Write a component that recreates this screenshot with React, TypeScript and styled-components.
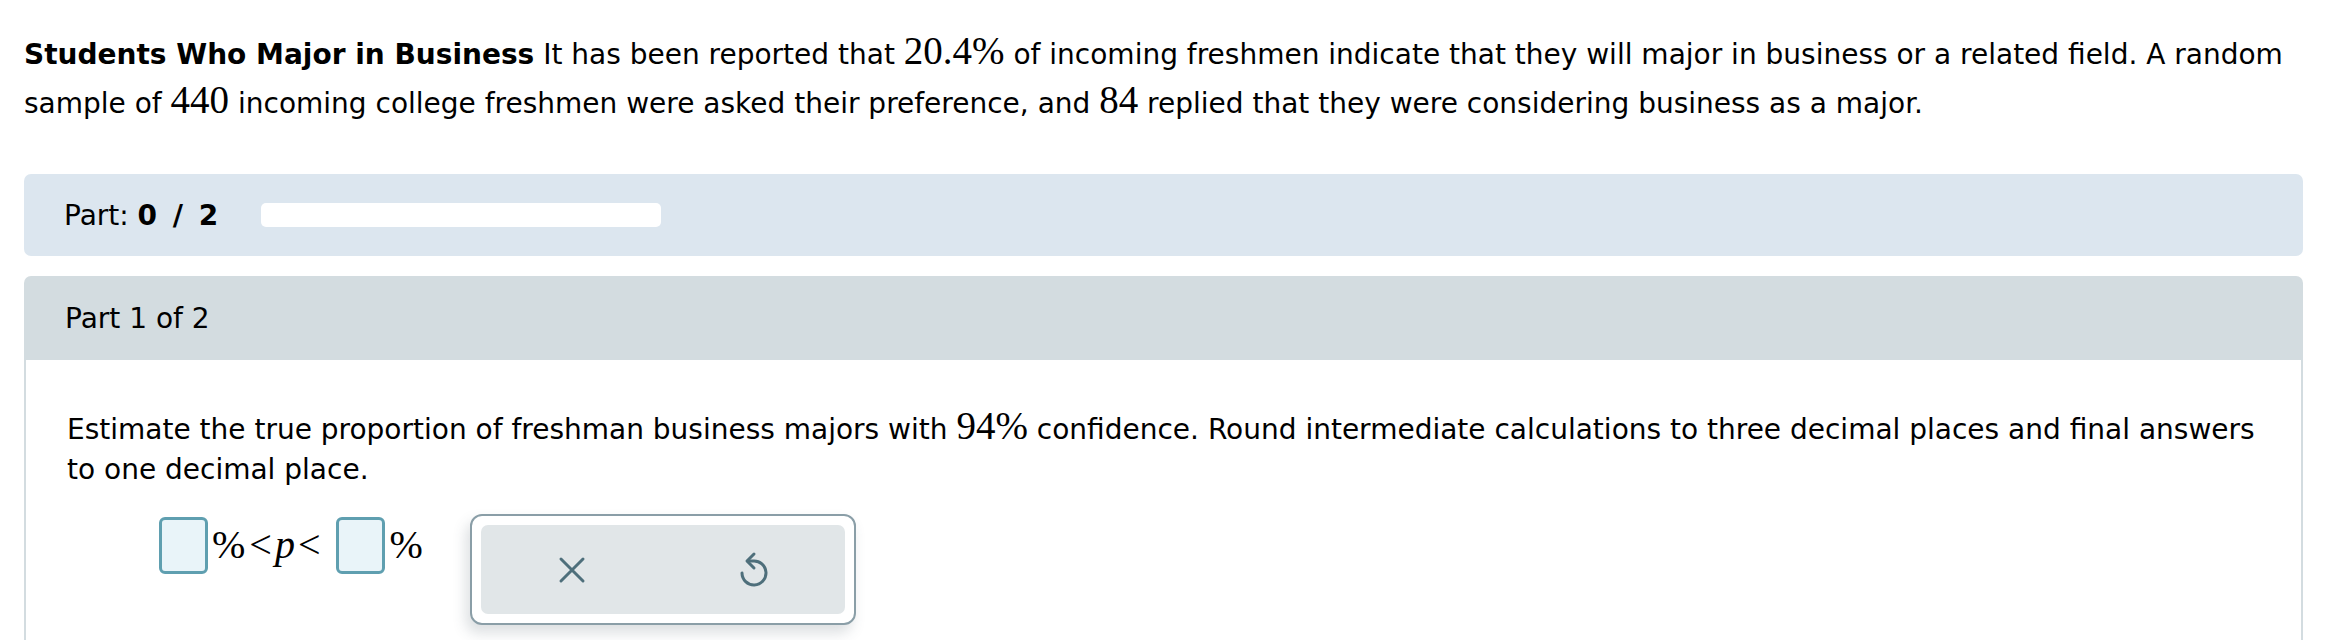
import React from "react";
import styled, { createGlobalStyle } from "styled-components";

const GlobalStyle = createGlobalStyle`
  body {
    margin: 0;
    background: #ffffff;
    color: #000000;
    font-family: "DejaVu Sans", Verdana, sans-serif;
    font-size: 28px;
  }
`;

const Page = styled.div`
  padding: 30px 37px 0 24px;
`;

const Intro = styled.p`
  margin: 0;
  line-height: 49px;
`;

const Math = styled.span<{ size?: number }>`
  font-family: "Liberation Serif", "Times New Roman", serif;
  font-size: ${(p) => p.size || 39}px;
  line-height: 1;
`;

const PartBar = styled.div`
  margin-top: 46px;
  height: 82px;
  display: flex;
  align-items: center;
  gap: 42px;
  padding-left: 40px;
  background: #dce6ef;
  border-radius: 7px;
`;

const Score = styled.b`
  word-spacing: 4px;
  letter-spacing: 1px;
`;

const Progress = styled.div`
  width: 400px;
  height: 24px;
  background: #ffffff;
  border-radius: 5px;
`;

const Card = styled.div`
  margin-top: 20px;
`;

const CardHeader = styled.div`
  height: 84px;
  display: flex;
  align-items: center;
  padding-left: 41px;
  background: #d3dce0;
  border-radius: 7px 7px 0 0;
`;

const CardBody = styled.div`
  border-left: 2px solid #d3dce0;
  border-right: 2px solid #d3dce0;
  padding: 46px 41px 40px 41px;
`;

const Question = styled.p`
  margin: 0;
  line-height: 40px;
`;

const AnswerRow = styled.div`
  margin-top: 24px;
  padding-left: 92px;
  display: flex;
  align-items: flex-start;
  gap: 43px;
`;

const Formula = styled.div`
  display: flex;
  align-items: center;
  height: 60px;
  padding-top: 1px;
`;

const Blank = styled.span`
  box-sizing: border-box;
  width: 49px;
  height: 57px;
  border: 3px solid #5f9fb0;
  background: #e9f4f9;
  border-radius: 6px;
`;

const Op = styled.span<{ gap?: number }>`
  font-family: "Liberation Serif", "Times New Roman", serif;
  font-size: 40px;
  line-height: 1;
  margin: 0 ${(p) => p.gap || 0}px;
  i {
    font-style: italic;
  }
`;

const ToolPanel = styled.div`
  box-sizing: border-box;
  width: 386px;
  height: 111px;
  padding: 9px;
  border: 2px solid #8a9ea7;
  border-radius: 12px;
  background: #ffffff;
  box-shadow: -4px 8px 14px rgba(60, 80, 90, 0.18);
`;

const ToolInner = styled.div`
  height: 100%;
  display: grid;
  grid-template-columns: 1fr 1fr;
  background: #e1e6e8;
  border-radius: 7px;
`;

const ToolButton = styled.button`
  border: 0;
  background: transparent;
  display: flex;
  align-items: center;
  justify-content: center;
  color: #4e6f7b;
  padding: 0;
`;

const ClearIcon = () => (
  <svg width="30" height="30" viewBox="0 0 30 30" fill="none">
    <path d="M4 4 L26 26 M26 4 L4 26" stroke="currentColor" strokeWidth="3" strokeLinecap="round" />
  </svg>
);

const UndoIcon = () => (
  <svg width="30" height="38" viewBox="0 0 30 38" fill="none">
    <path
      d="M9 10 H14 A12 12 0 1 1 3 22"
      stroke="currentColor"
      strokeWidth="3"
      strokeLinecap="round"
      fill="none"
    />
    <path
      d="M15 3 L8 10 L15 17"
      stroke="currentColor"
      strokeWidth="3"
      strokeLinecap="round"
      strokeLinejoin="round"
      fill="none"
    />
  </svg>
);

export default function App() {
  return (
    <>
      <GlobalStyle />
      <Page>
        <Intro>
          <b>Students Who Major in Business</b> It has been reported that <Math>20.4%</Math> of incoming
          freshmen indicate that they will major in business or a related field. A random sample of{" "}
          <Math>440</Math> incoming college freshmen were asked their preference, and <Math>84</Math> replied
          that they were considering business as a major.
        </Intro>

        <PartBar>
          <span>
            Part: <Score>0 / 2</Score>
          </span>
          <Progress />
        </PartBar>

        <Card>
          <CardHeader>Part 1 of 2</CardHeader>
          <CardBody>
            <Question>
              Estimate the true proportion of freshman business majors with <Math>94%</Math> confidence. Round
              intermediate calculations to three decimal places and final answers to one decimal place.
            </Question>
            <AnswerRow>
              <Formula>
                <Blank />
                <Op gap={4}>%</Op>
                <Op>&lt;</Op>
                <Op gap={3}>
                  <i>p</i>
                </Op>
                <Op>&lt;</Op>
                <Op gap={8} />
                <Blank />
                <Op gap={4}>%</Op>
              </Formula>
              <ToolPanel>
                <ToolInner>
                  <ToolButton aria-label="Clear">
                    <ClearIcon />
                  </ToolButton>
                  <ToolButton aria-label="Undo">
                    <UndoIcon />
                  </ToolButton>
                </ToolInner>
              </ToolPanel>
            </AnswerRow>
          </CardBody>
        </Card>
      </Page>
    </>
  );
}
